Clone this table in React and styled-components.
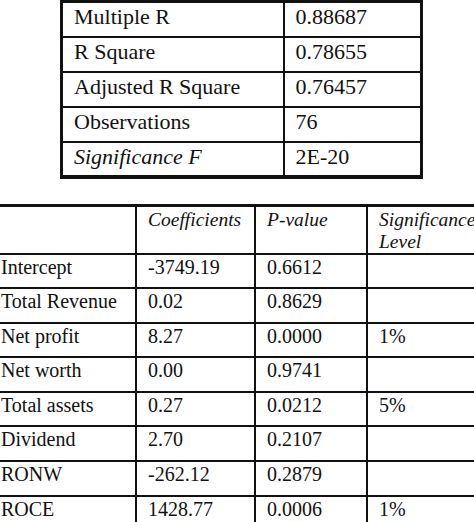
import React from 'react'
import styled, { createGlobalStyle } from 'styled-components'

const GlobalStyle = createGlobalStyle`
  html, body {
    margin: 0;
    padding: 0;
    background: #fff;
    overflow: hidden;
  }
  body {
    font-family: "Liberation Serif", "Times New Roman", serif;
    color: #111;
  }
`

const Page = styled.div`
  width: 474px;
  height: 522px;
  overflow: hidden;
  display: flex;
  flex-direction: column;
`

const Col = styled.col`
  width: ${p => (p.$w ? `${p.$w}px` : 'auto')};
`

const SummaryTable = styled.table`
  margin-left: 60px;
  width: 363px;
  border-collapse: collapse;
  table-layout: fixed;
  border: 3px solid #111;
  border-bottom-width: 4px;
  font-size: 22px;
  & td {
    border: 2px solid #111;
    height: 35px;
    padding: 2px 11px 0;
    box-sizing: border-box;
    vertical-align: top;
    line-height: 24px;
    white-space: nowrap;
  }
`

const Label = styled.td`
  font-style: ${p => (p.$italic ? 'italic' : 'normal')};
`

const CoefTable = styled.table`
  margin-top: 25px;
  margin-left: -12px;
  width: 510px;
  border-collapse: collapse;
  table-layout: fixed;
  border-top: 3px solid #111;
  font-size: 20px;
  & td, & th {
    border: 2px solid #111;
    padding: 0 11px;
    box-sizing: border-box;
    white-space: nowrap;
    text-align: left;
    font-weight: normal;
    vertical-align: top;
  }
  & td {
    height: 34.6px;
    line-height: 22px;
    padding-top: 1px;
  }
  & th {
    height: 45px;
    padding-top: 2px;
    line-height: 22px;
    font-style: italic;
    font-size: 19.5px;
  }
`

const summary = [
  ['Multiple R', '0.88687'],
  ['R Square', '0.78655'],
  ['Adjusted R Square', '0.76457'],
  ['Observations', '76'],
  ['Significance F', '2E-20', true],
]

const coefs = [
  ['Intercept', '-3749.19', '0.6612', ''],
  ['Total Revenue', '0.02', '0.8629', ''],
  ['Net profit', '8.27', '0.0000', '1%'],
  ['Net worth', '0.00', '0.9741', ''],
  ['Total assets', '0.27', '0.0212', '5%'],
  ['Dividend', '2.70', '0.2107', ''],
  ['RONW', '-262.12', '0.2879', ''],
  ['ROCE', '1428.77', '0.0006', '1%'],
]

const App = () => {
  return (
    <Page>
      <GlobalStyle />
      <SummaryTable>
        <colgroup>
          <Col $w={222} />
          <Col />
        </colgroup>
        <tbody>
          {summary.map(([label, value, italic]) => (
            <tr key={label}>
              <Label $italic={italic}>{label}</Label>
              <td>{value}</td>
            </tr>
          ))}
        </tbody>
      </SummaryTable>
      <CoefTable>
        <colgroup>
          <Col $w={147} />
          <Col $w={119} />
          <Col $w={112} />
          <Col />
        </colgroup>
        <thead>
          <tr>
            <th></th>
            <th>Coefficients</th>
            <th>P-value</th>
            <th>Significance<br />Level</th>
          </tr>
        </thead>
        <tbody>
          {coefs.map(row => (
            <tr key={row[0]}>
              {row.map((cell, i) => (
                <td key={i}>{cell}</td>
              ))}
            </tr>
          ))}
        </tbody>
      </CoefTable>
    </Page>
  )
}

export default App
